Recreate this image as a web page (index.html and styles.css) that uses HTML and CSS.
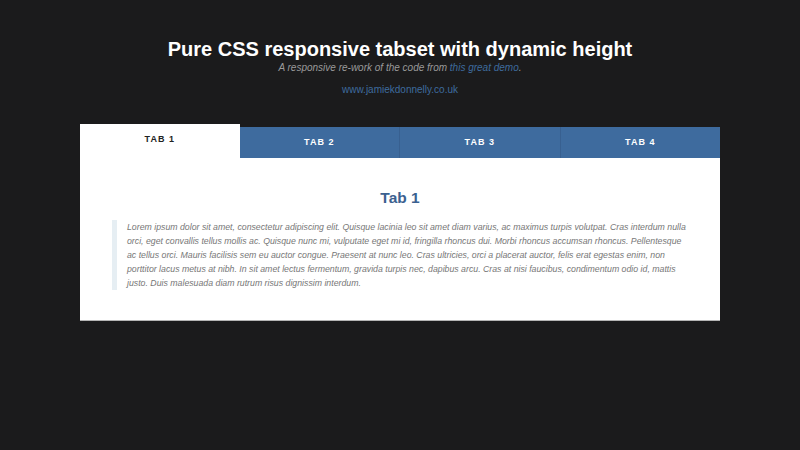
FILE: index.html
```html
<!DOCTYPE html>
<html lang="en">
<head>
    <meta charset="UTF-8">
    <meta name="viewport" content="width=device-width, initial-scale=1.0">
    <title>Pure CSS responsive tabset</title>
    <link rel="stylesheet" href="styles.css">
</head>
<body>
    <header class="intro">
        <h1>Pure CSS responsive tabset with dynamic height</h1>
        <p class="lead">A responsive re-work of the code from <a href="#">this great demo</a>.</p>
        <p class="site"><a href="#">www.jamiekdonnelly.co.uk</a></p>
    </header>

    <div class="tabset">
        <nav class="tabs">
            <a class="tab active" href="#tab1">Tab 1</a>
            <a class="tab" href="#tab2">Tab 2</a>
            <a class="tab" href="#tab3">Tab 3</a>
            <a class="tab" href="#tab4">Tab 4</a>
        </nav>
        <section class="panel" id="tab1">
            <h2>Tab 1</h2>
            <blockquote>Lorem ipsum dolor sit amet, consectetur adipiscing elit. Quisque lacinia leo sit amet diam varius, ac maximus turpis volutpat. Cras interdum nulla orci, eget convallis tellus mollis ac. Quisque nunc mi, vulputate eget mi id, fringilla rhoncus dui. Morbi rhoncus accumsan rhoncus. Pellentesque ac tellus orci. Mauris facilisis sem eu auctor congue. Praesent at nunc leo. Cras ultricies, orci a placerat auctor, felis erat egestas enim, non porttitor lacus metus at nibh. In sit amet lectus fermentum, gravida turpis nec, dapibus arcu. Cras at nisi faucibus, condimentum odio id, mattis justo. Duis malesuada diam rutrum risus dignissim interdum.</blockquote>
        </section>
    </div>
</body>
</html>
```

FILE: styles.css
```css
/* Page */
body {
    margin: 0;
    background-color: #1b1b1c;
    font-family: "Liberation Sans", Arial, sans-serif;
    color: #fff;
}

a {
    color: #3e6b9e;
    text-decoration: none;
}

/* Heading block */
.intro {
    text-align: center;
    padding-top: 37px;
}
.intro h1 {
    margin: 0;
    font-size: 20px;
    line-height: 24px;
    font-weight: bold;
}
.lead {
    margin: 0;
    font-size: 10px;
    line-height: 14px;
    font-style: italic;
    color: #9a9a9a;
}
.site {
    margin: 8px 0 0;
    font-size: 10px;
    line-height: 13px;
}

/* Tabset */
.tabset {
    width: 640px;
    margin: 28px auto 0;
}
.tabs {
    display: flex;
    align-items: flex-end;
}
.tab {
    flex: 1;
    height: 31px;
    line-height: 31px;
    text-align: center;
    background-color: #3e6b9e;
    color: #fff;
    font-size: 9px;
    font-weight: bold;
    letter-spacing: 1px;
    text-transform: uppercase;
}
.tab + .tab {
    border-left: 1px solid #386090;
}
.tab.active {
    height: 34px;
    line-height: 30px;
    background-color: #fff;
    color: #222;
}
.tab.active + .tab {
    border-left: none;
}

/* Panel */
.panel {
    background-color: #fff;
    padding: 31px 32px 30px;
    border-bottom: 1px solid #b5b5b5;
}
.panel h2 {
    margin: 0 0 13px;
    text-align: center;
    font-size: 15.5px;
    line-height: 18px;
    color: #3b6190;
}
.panel blockquote {
    margin: 0;
    padding: 0 0 0 10px;
    border-left: 5px solid #e6eef3;
    font-size: 8.75px;
    line-height: 14px;
    font-style: italic;
    color: #777;
}
```
